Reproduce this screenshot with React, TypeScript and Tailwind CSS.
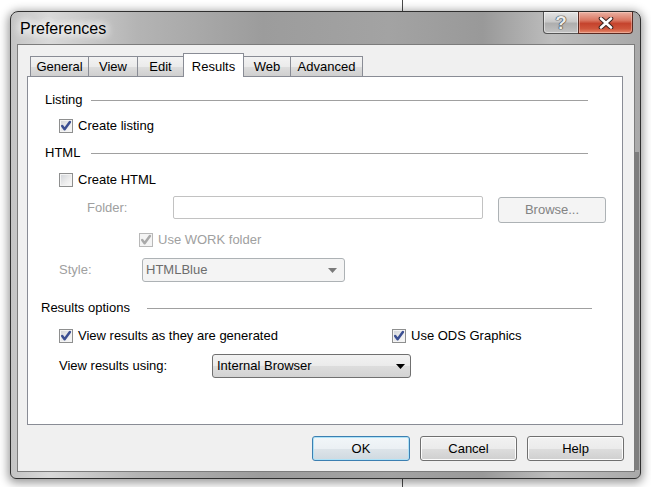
import React from "react";

const FONT = "font-['Liberation_Sans',Arial,sans-serif]";

function Check({ checked, disabled }: { checked?: boolean; disabled?: boolean }) {
  return (
    <span
      className={`relative flex h-[14px] w-[14px] shrink-0 items-center justify-center border ${
        disabled
          ? "border-[#b8b8b8] bg-[#f4f4f4]"
          : "border-[#8e8f8f] bg-[linear-gradient(135deg,#cfd2d7_0%,#eeeeee_60%,#fafafa_100%)] shadow-[inset_0_0_0_1px_#f4f4f4]"
      }`}
    >
      {checked && (
        <svg width="12" height="12" viewBox="0 0 12 12" className="absolute left-[0px] top-[0px]">
          <path
            d="M2.2 6 L4.6 9.2 L9.9 2"
            fill="none"
            stroke={disabled ? "#a9a9a9" : "#3b4f92"}
            strokeWidth="2.5"
            strokeLinecap="round"
            strokeLinejoin="round"
          />
        </svg>
      )}
    </span>
  );
}

function Arrow({ color }: { color: string }) {
  return (
    <svg width="9" height="5" viewBox="0 0 9 5">
      <path d="M0 0 H9 L4.5 5 Z" fill={color} />
    </svg>
  );
}

function GroupHeader({ label, pad, labelW, lineW }: { label: string; pad: string; labelW: string; lineW: string }) {
  return (
    <div className={`flex h-[16px] items-center ${pad}`}>
      <span className={`${labelW} shrink-0`}>{label}</span>
      <span className={`${lineW} h-px bg-[#a0a0a0]`} />
    </div>
  );
}

const tabs = [
  { name: "General", w: "w-[59px]" },
  { name: "View", w: "w-[50px]" },
  { name: "Edit", w: "w-[47px]" },
  { name: "Results", w: "w-[61px]", active: true },
  { name: "Web", w: "w-[48px]" },
  { name: "Advanced", w: "w-[73px]" },
];

export default function App() {
  return (
    <div className={`relative h-[487px] w-[651px] overflow-hidden bg-white text-[13px] text-black ${FONT}`}>
      {/* window behind */}
      <div className="absolute left-[402px] top-0 h-[12px] w-px bg-[#4a4a4a]" />
      <div className="absolute bottom-0 left-[402px] h-[10px] w-px bg-[#4a4a4a]" />

      {/* dialog window */}
      <div className="absolute left-[10px] top-[11px] flex h-[468px] w-[631px] flex-col rounded-t-[8px] rounded-b-[6px] border border-[#2f2f2f] bg-[linear-gradient(90deg,#c4c4c4_0%,#d9d9d9_6%,#b4b4b4_20%,#9c9c9c_40%,#a3a3a3_60%,#999999_75%,#bdbdbd_86%,#a9a9a9_100%)] shadow-[0_2px_10px_2px_rgba(0,0,0,0.4)]">
        {/* scrollbar of the window behind, seen through the glass */}
        <div className="absolute bottom-[8px] right-[1px] top-[140px] w-[4px] bg-[#7d7d7d]" />

        {/* title bar */}
        <div className="flex h-[32px] shrink-0 items-start justify-between">
          <span className="ml-[9px] mt-[7px] text-[16px] leading-[20px] text-black [text-shadow:0_0_8px_#fff,0_0_10px_#fff,0_0_12px_#fff]">
            Preferences
          </span>
          <div className="mr-[7px] flex">
            <div className="flex h-[22px] w-[36px] items-center justify-center rounded-bl-[4px] border border-t-0 border-[#555] bg-[linear-gradient(180deg,#e4e4e4_0%,#c9c9c9_45%,#aeaeae_55%,#c2c2c2_100%)] shadow-[inset_0_0_0_1px_rgba(255,255,255,0.45)]">
              <span className="text-[19px] font-bold leading-none text-[#ececec] [text-shadow:0_0_1px_#333,0_0_1px_#333,0_0_1px_#333]">
                ?
              </span>
            </div>
            <div className="-ml-px flex h-[22px] w-[55px] items-center justify-center rounded-br-[4px] border border-t-0 border-[#5a2a22] bg-[linear-gradient(180deg,#eab1a3_0%,#d97560_40%,#c5432d_55%,#cf563c_80%,#e58a6d_100%)] shadow-[inset_0_0_0_1px_rgba(255,220,210,0.4)]">
              <svg width="16" height="12" viewBox="0 0 16 12">
                <path d="M3 1.5 L13 10.5 M13 1.5 L3 10.5" stroke="#3a2320" strokeWidth="4.6" strokeLinecap="round" />
                <path d="M3 1.5 L13 10.5 M13 1.5 L3 10.5" stroke="#ffffff" strokeWidth="2.6" strokeLinecap="round" />
              </svg>
            </div>
          </div>
        </div>

        {/* client area */}
        <div className="relative mb-[6px] ml-[6px] mr-[5px] flex flex-1 flex-col border border-[#7c7c7c] bg-[#f0f0f0] pt-[8px]">
          {/* tabs */}
          <div className="ml-[12px] flex h-[23px] items-end">
            {tabs.map((t, i) =>
              t.active ? (
                <div
                  key={t.name}
                  className={`${t.w} relative z-10 -mb-px ${i ? "-ml-px" : ""} flex h-[24px] justify-center border border-b-0 border-[#898c95] bg-white pt-[3px]`}
                >
                  {t.name}
                </div>
              ) : (
                <div
                  key={t.name}
                  className={`${t.w} ${i ? "-ml-px" : ""} flex h-[20px] items-center justify-center border border-b-0 border-[#898c95] bg-[linear-gradient(180deg,#f3f3f3_0%,#ebebeb_50%,#dddddd_51%,#cfcfcf_100%)]`}
                >
                  {t.name}
                </div>
              )
            )}
          </div>

          {/* panel */}
          <div className="ml-[9px] flex h-[349px] w-[596px] flex-col border border-[#898c95] bg-white">
            <div className="mt-[15px]">
              <GroupHeader label="Listing" pad="pl-[17px]" labelW="w-[46px]" lineW="w-[497px]" />
            </div>
            <div className="mt-[10px] flex h-[16px] items-center gap-[5px] pl-[31px]">
              <Check checked />
              <span>Create listing</span>
            </div>
            <div className="mt-[11px]">
              <GroupHeader label="HTML" pad="pl-[17px]" labelW="w-[46px]" lineW="w-[497px]" />
            </div>
            <div className="mt-[11px] flex h-[16px] items-center gap-[5px] pl-[31px]">
              <Check />
              <span>Create HTML</span>
            </div>
            <div className="mt-[8px] flex h-[27px] items-start pl-[59px]">
              <span className="flex h-[23px] w-[86px] items-center text-[#a0a0a0]">Folder:</span>
              <span className="h-[23px] w-[310px] rounded-[2px] border border-[#c2c2c2] bg-white" />
              <span className="ml-[15px] mt-[1px] flex h-[26px] w-[108px] items-center justify-center rounded-[3px] border border-[#adb2b5] bg-[#f4f4f4] text-[#838383]">
                Browse...
              </span>
            </div>
            <div className="mt-[9px] flex h-[16px] items-center gap-[5px] pl-[111px]">
              <Check checked disabled />
              <span className="text-[#a0a0a0]">Use WORK folder</span>
            </div>
            <div className="mt-[10px] flex h-[24px] items-center pl-[31px]">
              <span className="w-[83px] text-[#a0a0a0]">Style:</span>
              <span className="flex h-[24px] w-[203px] items-center justify-between rounded-[3px] border border-[#adb2b5] bg-[#f4f4f4] pl-[3px] pr-[7px] text-[#6d6d6d]">
                HTMLBlue
                <Arrow color="#7a7a7a" />
              </span>
            </div>
            <div className="mt-[18px]">
              <GroupHeader label="Results options" pad="pl-[13px]" labelW="w-[106px]" lineW="w-[445px]" />
            </div>
            <div className="mt-[12px] flex h-[16px] items-center pl-[31px]">
              <div className="flex w-[333px] items-center gap-[5px]">
                <Check checked />
                <span>View results as they are generated</span>
              </div>
              <div className="flex items-center gap-[5px]">
                <Check checked />
                <span>Use ODS Graphics</span>
              </div>
            </div>
            <div className="mt-[10px] flex h-[24px] items-center pl-[31px]">
              <span className="w-[153px]">View results using:</span>
              <span className="flex h-[24px] w-[199px] items-center justify-between rounded-[3px] border border-[#707070] bg-[linear-gradient(180deg,#f2f2f2_0%,#ebebeb_50%,#dddddd_51%,#d3d3d3_100%)] pl-[4px] pr-[5px]">
                Internal Browser
                <Arrow color="#000" />
              </span>
            </div>
          </div>

          {/* buttons */}
          <div className="mr-[10px] mt-[11px] flex justify-end gap-[10px]">
            <button className="flex h-[25px] w-[98px] items-center justify-center rounded-[3px] border border-[#3c7fb1] bg-[linear-gradient(180deg,#f2f6f9_0%,#ebf0f4_50%,#dde4e9_51%,#cfd9e0_100%)] shadow-[inset_0_0_0_1px_#aee2f7]">
              OK
            </button>
            <button className="flex h-[25px] w-[97px] items-center justify-center rounded-[3px] border border-[#707070] bg-[linear-gradient(180deg,#f2f2f2_0%,#ebebeb_50%,#dddddd_51%,#cfcfcf_100%)] shadow-[inset_0_0_0_1px_#fcfcfc]">
              Cancel
            </button>
            <button className="flex h-[25px] w-[97px] items-center justify-center rounded-[3px] border border-[#707070] bg-[linear-gradient(180deg,#f2f2f2_0%,#ebebeb_50%,#dddddd_51%,#cfcfcf_100%)] shadow-[inset_0_0_0_1px_#fcfcfc]">
              Help
            </button>
          </div>
        </div>
      </div>
    </div>
  );
}
